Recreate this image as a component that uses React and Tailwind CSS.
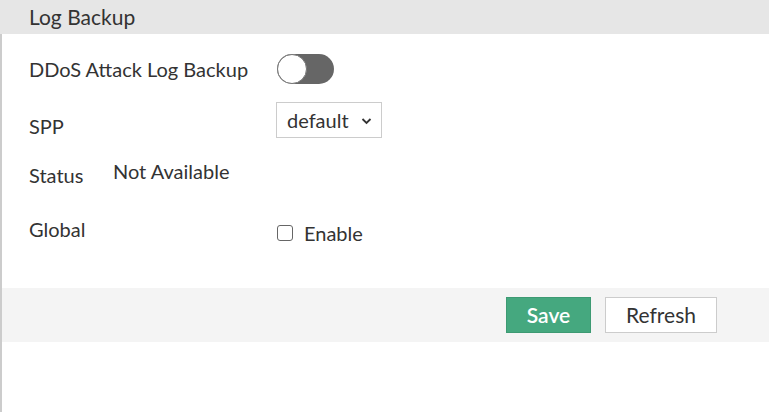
import React from 'react';

const Toggle = () => (
  <div className="relative w-[57px] h-[30px] rounded-full bg-[#666666]">
    <div className="absolute left-0 top-0 w-[30px] h-[30px] rounded-full bg-white border border-[#777]" />
  </div>
);

export default function App() {
  return (
    <div className="w-[769px] h-[412px] bg-white text-[#333] overflow-hidden" style={{ fontFamily: 'Lato, "Open Sans", sans-serif' }}>
      {/* Header */}
      <div className="h-[34px] bg-[#e6e6e6] pl-[29px] flex items-center text-[21px] leading-[24px] pb-[1px]">
        Log Backup
      </div>

      <div className="h-[378px] border-l-2 border-[#cccccc]">
        <div className="pl-[27px] pt-[20px] text-[20px] leading-[24px]">
          {/* DDoS toggle */}
          <div className="flex items-center h-[30px]">
            <div className="w-[248px]">DDoS Attack Log Backup</div>
            <Toggle />
          </div>

          {/* SPP */}
          <div className="flex items-start mt-[18px]">
            <div className="w-[247px] pt-[12px]">SPP</div>
            <div className="w-[106px] h-[36px] border border-[#cccccc] flex items-center pl-[10px] pr-[9px] justify-between">
              <span>default</span>
              <svg width="11" height="8" viewBox="0 0 11 8" className="mt-[1px]">
                <path d="M1.5 2 L5.5 6 L9.5 2" fill="none" stroke="#333" strokeWidth="1.8" />
              </svg>
            </div>
          </div>

          {/* Status */}
          <div className="flex items-start mt-[21px]">
            <div className="w-[84px] pt-[4px]">Status</div>
            <div>Not Available</div>
          </div>

          {/* Global */}
          <div className="flex items-start mt-[30px]">
            <div className="w-[248px]">Global</div>
            <div className="flex items-center gap-[11px] mt-[4px]">
              <div className="w-[16px] h-[16px] rounded-[3px] border border-[#666] bg-white" />
              <span>Enable</span>
            </div>
          </div>
        </div>

        {/* Footer */}
        <div className="mt-[43px] h-[54px] bg-[#f4f4f4] flex items-center justify-end pr-[52px] gap-[14px]">
          <button className="w-[85px] h-[36px] bg-[#45a87f] border border-[#3d9a73] text-white text-[21px] font-semibold">
            Save
          </button>
          <button className="w-[112px] h-[36px] bg-white border border-[#cccccc] text-[#333] text-[21px]">
            Refresh
          </button>
        </div>
      </div>
    </div>
  );
}
